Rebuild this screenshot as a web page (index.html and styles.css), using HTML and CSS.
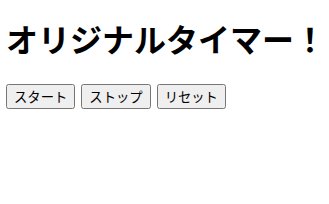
FILE: index.html
```html
<!DOCTYPE html>
<html lang="ja">
<head>
    <meta charset="UTF-8">
    <meta name="viewport" content="width=device-width, initial-scale=1.0">
    <title>オリジナルタイマー</title>
    <link rel="stylesheet" href="styles.css">
</head>
<body>
    <h1 class="title">オリジナルタイマー！</h1>
    <div class="buttons">
        <button class="btn">スタート</button>
        <button class="btn">ストップ</button>
        <button class="btn">リセット</button>
    </div>
</body>
</html>
```

FILE: styles.css
```css
body{
    font-family: "Noto Sans CJK JP", sans-serif;
    margin: 8px 6px;
}
.title{
    font-size: 32px;
    font-weight: bold;
    line-height: 32px;
    white-space: nowrap;
    margin: 14px 0 30px;
}
.buttons{
    display: flex;
    gap: 6px;
}
.btn{
    font-family: "Noto Sans CJK JP", sans-serif;
    font-size: 13.33px;
    padding: 1px 6px;
}
```
